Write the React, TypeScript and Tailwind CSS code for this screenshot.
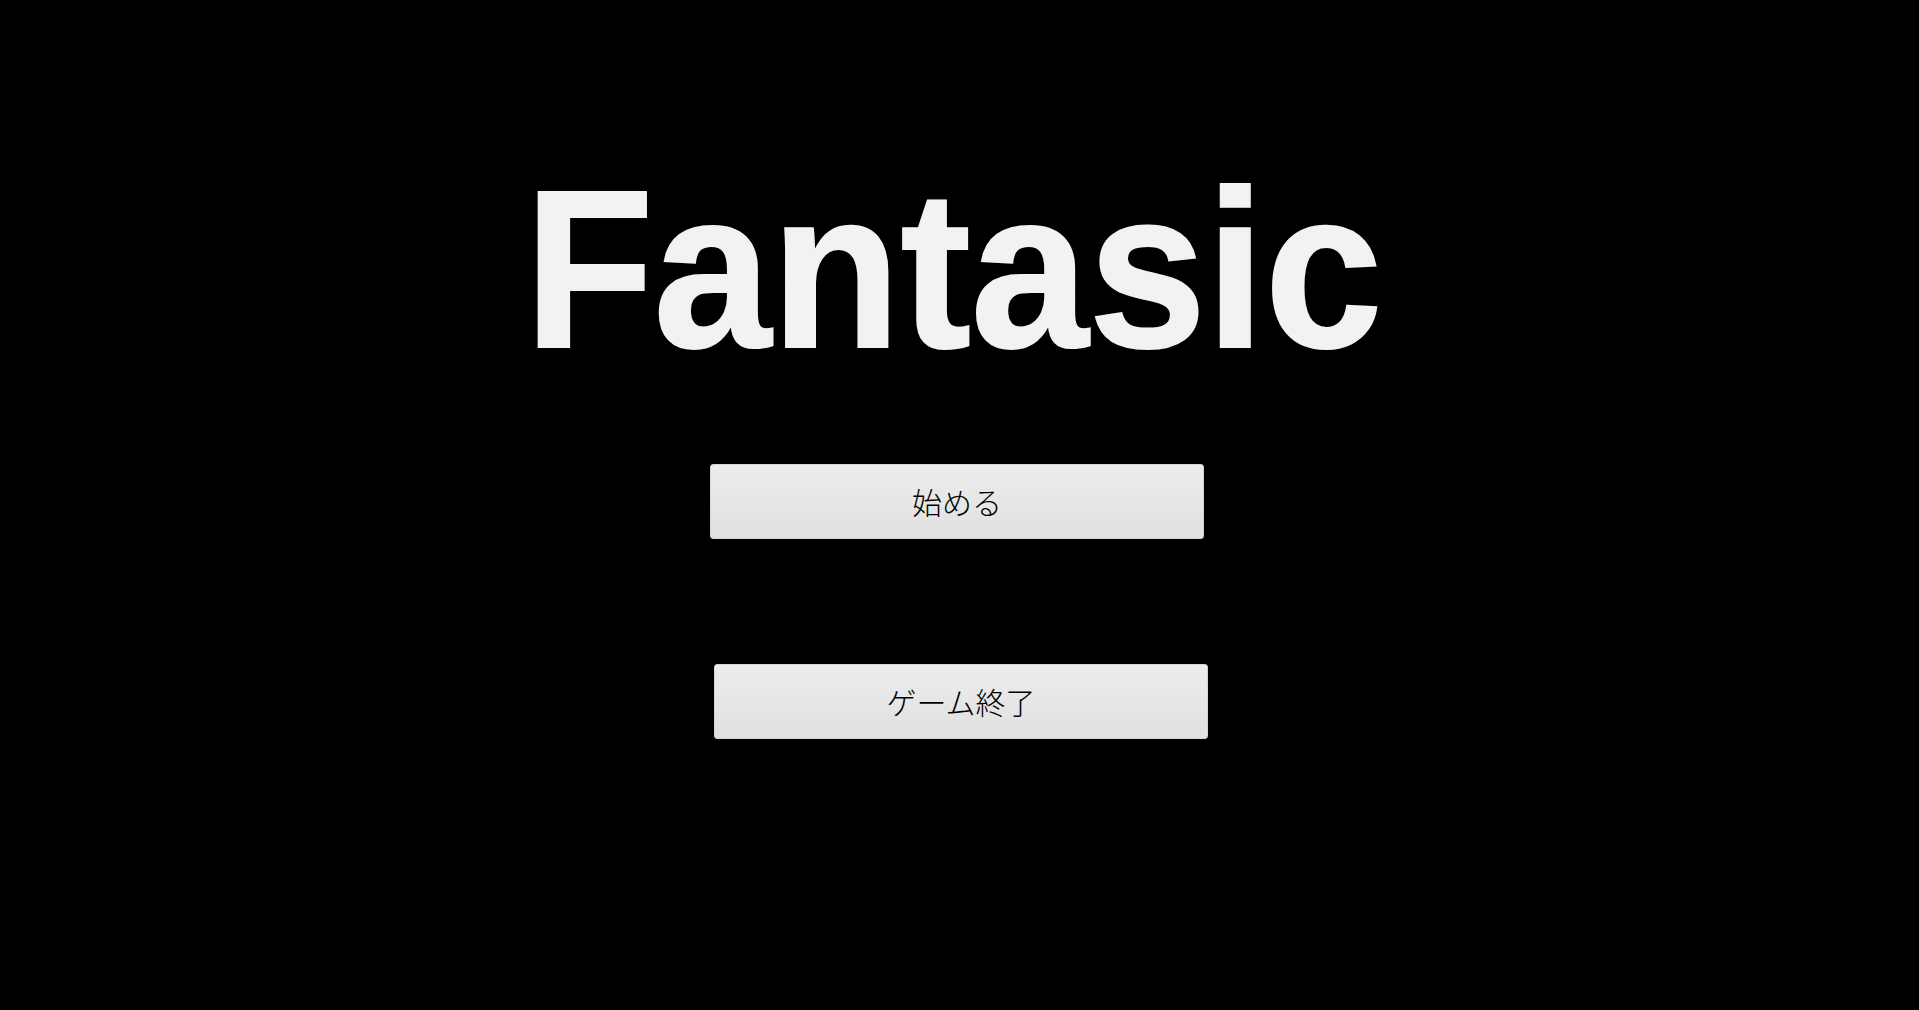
const MENU = [
  { label: "始める", shift: "mr-[5px]" },
  { label: "ゲーム終了", shift: "ml-[3px]" },
];

export default function App() {
  return (
    <div className="min-h-screen w-full bg-black flex flex-col items-center overflow-hidden">
      <h1
        className="mt-[157px] mr-[13px] text-[225px] leading-none font-bold text-[#f2f2f2] scale-x-[0.94] whitespace-nowrap [-webkit-text-stroke:2px_#f2f2f2]"
        style={{ fontFamily: '"Liberation Sans", Arial, sans-serif' }}
      >
        Fantasic
      </h1>

      <div className="mt-[82px] flex flex-col items-center gap-[125px]">
        {MENU.map((item) => (
          <button
            key={item.label}
            className={`${item.shift} w-[494px] h-[75px] rounded-[3px] border border-[#d4d4d4] bg-gradient-to-b from-[#ededed] to-[#e0e0e0] flex items-center justify-center text-[30px] font-light text-black`}
            style={{ fontFamily: '"Noto Sans CJK JP", "Noto Sans", sans-serif' }}
          >
            {item.label}
          </button>
        ))}
      </div>
    </div>
  );
}
